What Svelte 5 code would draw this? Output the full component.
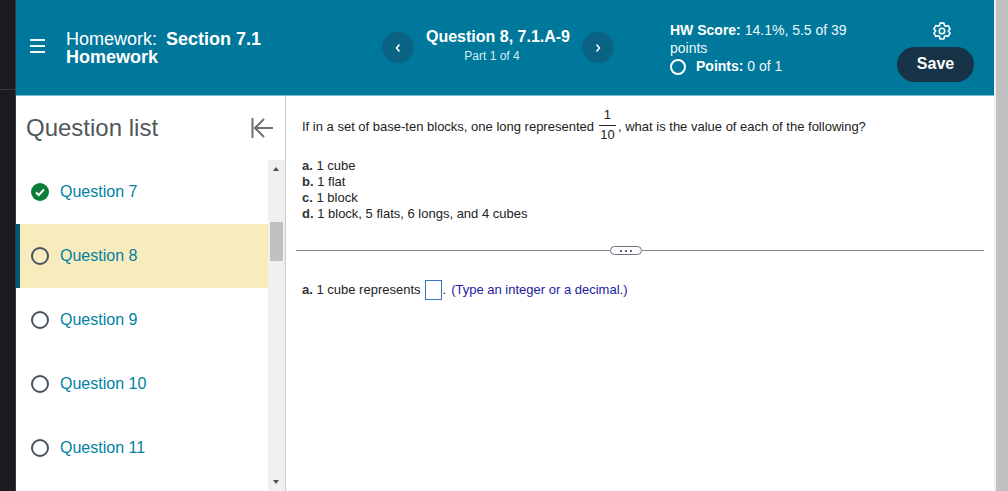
<script>
	const questions = [
		{ label: 'Question 7', done: true },
		{ label: 'Question 8', active: true },
		{ label: 'Question 9' },
		{ label: 'Question 10' },
		{ label: 'Question 11' }
	];
</script>

<div class="page">
	<div class="edge"><div class="edge-line"></div></div>

	<main class="app">
		<header class="top">
			<button class="menu" type="button" aria-label="Menu">
				<span></span><span></span><span></span>
			</button>
			<div class="hw-title">Homework:&nbsp; <b>Section 7.1 Homework</b></div>

			<div class="nav">
				<button class="round" type="button" aria-label="Previous">
					<svg width="8" height="10" viewBox="0 0 8 10"><path d="M5.5 1.5 2.5 5l3 3.5" fill="none" stroke="#fff" stroke-width="1.6" /></svg>
				</button>
				<div class="q-title">
					<div class="q-name">Question 8, 7.1.A-9</div>
					<div class="q-part">Part 1 of 4</div>
				</div>
				<button class="round" type="button" aria-label="Next">
					<svg width="8" height="10" viewBox="0 0 8 10"><path d="M2.5 1.5 5.5 5l-3 3.5" fill="none" stroke="#fff" stroke-width="1.6" /></svg>
				</button>
			</div>

			<div class="score">
				<div class="score-line"><b>HW Score:</b> 14.1%, 5.5 of 39 points</div>
				<div class="points"><span class="ring-small"></span><span><b>Points:</b> 0 of 1</span></div>
			</div>

			<div class="actions">
				<svg class="gear" width="20" height="20" viewBox="0 0 24 24" fill="none" stroke="#fff" stroke-width="1.9" stroke-linejoin="round">
					<path d="M9.7 2.5h4.6l.7 2.9 1.5.9 2.9-.8 2.3 4-2.2 2.5 2.2 2.5-2.3 4-2.9-.8-1.5.9-.7 2.9H9.7L9 18.6l-1.5-.9-2.9.8-2.3-4L4.500 12 2.300 9.500l2.300-4 2.900.8L9 5.400z" />
					<circle cx="12" cy="12" r="3.3" />
				</svg>
				<button class="save" type="button">Save</button>
			</div>
		</header>

		<div class="body">
			<aside class="side">
				<div class="side-head">
					<h2>Question list</h2>
					<svg width="24" height="22" viewBox="0 0 24 22" fill="none" stroke="#6a7075" stroke-width="2">
						<path d="M2.500 1v20M23 11H5.500M14 2l-9 9 9 9" />
					</svg>
				</div>
				<div class="list-wrap">
					<ul class="list">
						{#each questions as q}
							<li class="row" class:active={q.active}>
								{#if q.done}
									<svg class="state" width="18" height="18" viewBox="0 0 18 18">
										<circle cx="9" cy="9" r="9" fill="#0b7f3a" />
										<path d="M5 9.500 7.800 12 13 6.500" fill="none" stroke="#fff" stroke-width="2" />
									</svg>
								{:else}
									<span class="ring"></span>
								{/if}
								<span class="q-label">{q.label}</span>
							</li>
						{/each}
					</ul>
					<div class="rail">
						<span class="arrow up"></span>
						<span class="thumb"></span>
						<span class="arrow down"></span>
					</div>
				</div>
			</aside>

			<section class="content">
				<div class="prompt">
					<span>If in a set of base-ten blocks, one long represented</span>
					<span class="frac"><span class="num">1</span><span class="den">10</span></span>
					<span>, what is the value of each of the following?</span>
				</div>
				<div class="parts">
					<div><b>a.</b> 1 cube</div>
					<div><b>b.</b> 1 flat</div>
					<div><b>c.</b> 1 block</div>
					<div><b>d.</b> 1 block, 5 flats, 6 longs, and 4 cubes</div>
				</div>
				<div class="divider">
					<span class="pill">
						<i></i><i></i><i></i>
					</span>
				</div>
				<div class="answer">
					<span><b>a.</b> 1 cube represents</span>
					<span class="box"></span>
					<span>.</span>
					<span class="hint">(Type an integer or a decimal.)</span>
				</div>
			</section>
		</div>
	</main>

	<div class="page-scroll"></div>
</div>

<style>
	:global(body) {
		margin: 0;
		background: #fff;
	}

	.page {
		display: flex;
		height: 491px;
		overflow: hidden;
		font-family: 'Liberation Sans', Arial, sans-serif;
	}

	.edge {
		flex: 0 0 16px;
		background: #1b1c1f;
		border-right: 1px solid #3a3a3c;
		box-sizing: border-box;
		padding-top: 89px;
	}

	.edge-line {
		height: 1px;
		background: #3a3b3d;
	}

	.app {
		flex: 1;
		min-width: 0;
		display: flex;
		flex-direction: column;
	}

	.page-scroll {
		flex: 0 0 14px;
		box-sizing: border-box;
		border-left: 2px solid #f0f0f0;
		background: #c1c1c1;
	}

	.top {
		flex: 0 0 96px;
		display: flex;
		align-items: center;
		box-sizing: border-box;
		background: #00789c;
		border-bottom: 1px solid #7fbcd0;
		color: #fff;
		position: relative;
	}

	.menu {
		flex: 0 0 auto;
		width: 15px;
		margin: -3px 0 0 14px;
		padding: 0;
		border: 0;
		background: none;
		display: flex;
		flex-direction: column;
		gap: 4px;
	}

	.menu span {
		display: block;
		height: 2px;
		background: #f1f6f8;
	}

	.hw-title {
		width: 232px;
		margin-left: 21px;
		font-size: 18px;
		line-height: 18px;
	}

	.hw-title b {
		margin-left: -1px;
	}

	.nav {
		display: flex;
		align-items: center;
		margin-left: 84px;
	}

	.round {
		width: 32px;
		height: 31px;
		padding: 0;
		border: 0;
		border-radius: 50%;
		background: #0a6284;
		display: grid;
		place-items: center;
	}

	.q-title {
		width: 168px;
		text-align: center;
	}

	.q-name {
		font-size: 16px;
		font-weight: 700;
		line-height: 20px;
		margin-top: -5px;
	}

	.q-part {
		margin-top: 2px;
		padding-right: 12px;
		font-size: 12px;
		line-height: 15px;
		color: #d6ebf2;
	}

	.score {
		width: 200px;
		margin-left: 56px;
		font-size: 14px;
		line-height: 18px;
		color: #eef7fa;
	}

	.score-line {
		width: 190px;
	}

	.score b,
	.points b {
		color: #fff;
	}

	.points {
		display: flex;
		align-items: center;
		gap: 10px;
	}

	.ring-small {
		width: 12px;
		height: 12px;
		border: 2px solid #fff;
		border-radius: 50%;
		margin-top: 2px;
	}

	.actions {
		margin-left: 27px;
		display: flex;
		flex-direction: column;
		align-items: center;
		gap: 6px;
		margin-top: 7px;
	}

	.gear {
		display: block;
		margin-left: 12px;
	}

	.save {
		width: 77px;
		height: 35px;
		border: 0;
		border-radius: 18px;
		background: #163347;
		color: #fff;
		font: 700 16px 'Liberation Sans', Arial, sans-serif;
	}

	.body {
		flex: 1;
		min-height: 0;
		display: flex;
	}

	.side {
		flex: 0 0 270px;
		box-sizing: border-box;
		border-right: 1px solid #c9c8d8;
		display: flex;
		flex-direction: column;
		min-height: 0;
	}

	.side-head {
		flex: 0 0 64px;
		display: flex;
		align-items: center;
		justify-content: space-between;
		padding: 0 11px 0 10px;
		box-sizing: border-box;
	}

	.side-head h2 {
		margin: 0;
		font-size: 24px;
		font-weight: 400;
		color: #505759;
	}

	.list-wrap {
		flex: 1;
		min-height: 0;
		display: flex;
	}

	.list {
		flex: 1;
		margin: 0;
		padding: 0;
		list-style: none;
		overflow: hidden;
	}

	.row {
		height: 64px;
		display: flex;
		align-items: center;
		gap: 11px;
		padding-left: 15px;
		box-sizing: border-box;
	}

	.row.active {
		background: #f8ecbe;
		border-left: 4px solid #005a75;
		padding-left: 11px;
	}

	.state {
		flex: 0 0 auto;
	}

	.ring {
		width: 14px;
		height: 14px;
		border: 2px solid #46535f;
		border-radius: 50%;
	}

	.q-label {
		font-size: 16px;
		color: #007fa3;
	}

	.rail {
		flex: 0 0 17px;
		background: #f0f0f0;
		position: relative;
	}

	.thumb {
		position: absolute;
		top: 62px;
		left: 2px;
		width: 13px;
		height: 39px;
		background: #c1c1c1;
	}

	.arrow {
		position: absolute;
		left: 5px;
		width: 0;
		height: 0;
		border-left: 3.500px solid transparent;
		border-right: 3.500px solid transparent;
	}

	.arrow.up {
		top: 7px;
		border-bottom: 4px solid #505050;
	}

	.arrow.down {
		bottom: 7px;
		border-top: 4px solid #505050;
	}

	.content {
		flex: 1;
		min-width: 0;
		padding: 0 10px 0 16px;
		font-size: 13px;
		line-height: 16px;
		color: #222;
	}

	.prompt {
		display: flex;
		align-items: center;
		height: 44px;
		margin-top: 9px;
		white-space: pre;
	}

	.frac {
		display: inline-flex;
		flex-direction: column;
		align-items: center;
		margin: 0 2px 4px 5px;
		width: 17px;
	}

	.num {
		padding-bottom: 3px;
		line-height: 14px;
		border-bottom: 1px solid #222;
		width: 100%;
		text-align: center;
	}

	.den {
		padding-top: 2px;
		line-height: 14px;
	}

	.parts {
		margin-top: 9px;
	}

	.parts b,
	.answer b {
		color: #333;
	}

	.divider {
		height: 1px;
		margin: 28px 0 0 -6px;
		background: #858c94;
		position: relative;
	}

	.pill {
		position: absolute;
		left: 314px;
		top: -4px;
		width: 32px;
		height: 9px;
		box-sizing: border-box;
		border: 1px solid #6c7680;
		border-radius: 5px;
		background: #fff;
		display: flex;
		justify-content: center;
		align-items: center;
		gap: 3px;
	}

	.pill i {
		width: 2px;
		height: 2px;
		background: #5a646e;
	}

	.answer {
		display: flex;
		align-items: center;
		margin-top: 29px;
		height: 20px;
	}

	.box {
		width: 15px;
		height: 18px;
		border: 1px solid #3b6fc4;
		margin-left: 4px;
		margin-right: 1px;
	}

	.hint {
		margin-left: 5px;
		color: #1b1b9e;
	}
</style>
